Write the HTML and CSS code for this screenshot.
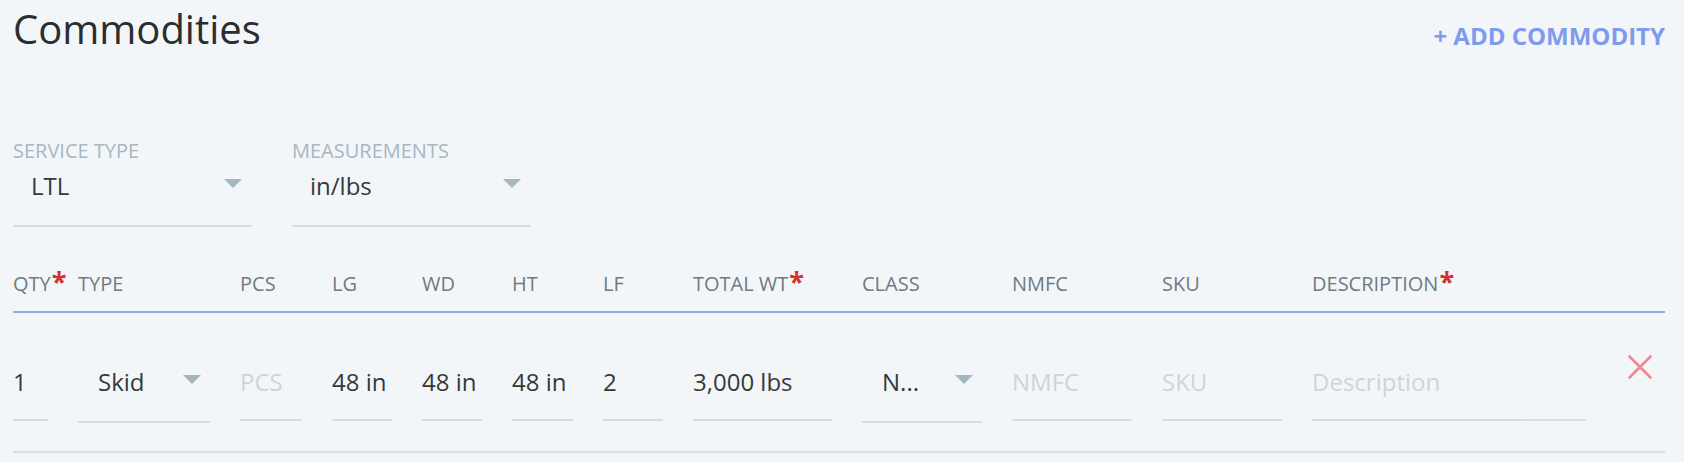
FILE: index.html
```html
<!DOCTYPE html>
<html lang="en">
<head>
<meta charset="utf-8">
<title>Commodities</title>
<link rel="stylesheet" href="styles.css">
</head>
<body>
<section class="panel">
  <header class="title-row">
    <h1 class="title">Commodities</h1>
    <button class="add-btn" type="button">+ ADD COMMODITY</button>
  </header>

  <div class="selects">
    <div class="select-field">
      <div class="select-label">Service Type</div>
      <div class="select-value"><span>LTL</span><span class="caret"></span></div>
    </div>
    <div class="select-field">
      <div class="select-label">Measurements</div>
      <div class="select-value"><span>in/lbs</span><span class="caret"></span></div>
    </div>
  </div>

  <div class="grid head-row">
    <div class="th">QTY<span class="req">*</span></div>
    <div class="th">TYPE</div>
    <div class="th">PCS</div>
    <div class="th">LG</div>
    <div class="th">WD</div>
    <div class="th">HT</div>
    <div class="th">LF</div>
    <div class="th">TOTAL WT<span class="req">*</span></div>
    <div class="th">CLASS</div>
    <div class="th">NMFC</div>
    <div class="th">SKU</div>
    <div class="th">DESCRIPTION<span class="req">*</span></div>
    <div class="th"></div>
  </div>

  <div class="grid data-row">
    <div class="text-field"><input class="inp" value="1"></div>
    <div class="row-select"><span>Skid</span><span class="caret"></span></div>
    <div class="text-field"><input class="inp" placeholder="PCS"></div>
    <div class="text-field"><input class="inp" value="48 in"></div>
    <div class="text-field"><input class="inp" value="48 in"></div>
    <div class="text-field"><input class="inp" value="48 in"></div>
    <div class="text-field"><input class="inp" value="2"></div>
    <div class="text-field"><input class="inp" value="3,000 lbs"></div>
    <div class="row-select"><span>N...</span><span class="caret"></span></div>
    <div class="text-field"><input class="inp" placeholder="NMFC"></div>
    <div class="text-field"><input class="inp" placeholder="SKU"></div>
    <div class="text-field"><input class="inp" placeholder="Description"></div>
    <div class="remove-cell">
      <svg class="remove" width="24" height="24" viewBox="0 0 24 24" aria-label="Remove">
        <path d="M1.5 1.5 L22.5 22.5 M22.5 1.5 L1.5 22.5" stroke="#f2868d" stroke-width="2.6" stroke-linecap="round" fill="none"/>
      </svg>
    </div>
  </div>

  <div class="ghost ghost-a"></div>
  <div class="ghost ghost-b"></div>
</section>
</body>
</html>
```

FILE: styles.css
```css
* { box-sizing: border-box; }

html, body {
  margin: 0;
  padding: 0;
  background: #ffffff;
}

body {
  font-family: "Open Sans", "Noto Sans", sans-serif;
  color: #363a3d;
}

.panel {
  position: relative;
  width: 1684px;
  height: 462px;
  padding: 0 19px 0 13px;
  background: #f3f6f9;
}

.title-row {
  display: flex;
  justify-content: space-between;
  align-items: flex-start;
}

.title {
  margin: 5px 0 0 0;
  font-size: 40px;
  line-height: 48px;
  font-weight: 400;
  color: #2b2d2f;
}

.add-btn {
  margin: 20px 0 0 0;
  padding: 0;
  border: 0;
  background: transparent;
  font-family: inherit;
  font-size: 24px;
  line-height: 32px;
  font-weight: 700;
  color: #7f9bee;
  cursor: pointer;
}

.selects {
  display: flex;
  gap: 40px;
  margin-top: 86px;
}

.select-field {
  width: 239px;
  border-bottom: 2px solid #d8dcdf;
}

.select-label {
  font-size: 20px;
  line-height: 24px;
  text-transform: uppercase;
  color: #a8b7c0;
}

.select-value {
  display: flex;
  justify-content: space-between;
  align-items: flex-start;
  margin-top: 7px;
  height: 55px;
  padding: 0 10px 0 18px;
  font-size: 24px;
  line-height: 32px;
  color: #35393c;
}

.caret {
  display: block;
  width: 0;
  height: 0;
  margin-top: 9px;
  border-left: 9px solid transparent;
  border-right: 9px solid transparent;
  border-top: 9px solid #a4b6c0;
}

.grid {
  display: grid;
  grid-template-columns: 35px 132px 62px 60px 60px 61px 60px 139px 120px 120px 120px 274px 48px;
  column-gap: 30px;
}

.head-row {
  margin-top: 45px;
  padding-bottom: 15px;
  border-bottom: 2px solid #91a9f2;
}

.th {
  font-size: 20px;
  line-height: 24px;
  color: #6f7a82;
  white-space: nowrap;
}

.req {
  display: inline-block;
  vertical-align: top;
  margin-left: 1px;
  font-size: 27px;
  line-height: 18px;
  font-weight: 700;
  color: #d6302c;
}

.data-row {
  align-items: start;
  padding-top: 53px;
  padding-bottom: 28px;
  border-bottom: 2px solid #dcdfe2;
}

.text-field {
  padding-bottom: 21px;
  border-bottom: 2px solid #d8dcdf;
}

.inp {
  display: block;
  width: 100%;
  height: 32px;
  margin: 0;
  padding: 0;
  border: 0;
  outline: none;
  background: transparent;
  font-family: inherit;
  font-size: 24px;
  line-height: 32px;
  color: #35393c;
}

.inp::placeholder {
  color: #cfd4d8;
  opacity: 1;
}

.row-select {
  display: flex;
  justify-content: space-between;
  align-items: flex-start;
  height: 57px;
  padding: 0 9px 23px 20px;
  border-bottom: 2px solid #d8dcdf;
  font-size: 24px;
  line-height: 32px;
  color: #35393c;
}

.remove-cell {
  display: flex;
  justify-content: center;
}

.remove {
  display: block;
  margin-top: -11px;
}

.ghost {
  position: absolute;
  top: 390px;
  width: 63px;
  height: 50px;
  border-radius: 8px;
  background: rgba(255, 255, 255, 0.07);
}

.ghost-a { left: 1525px; }
.ghost-b { left: 1605px; }
```
